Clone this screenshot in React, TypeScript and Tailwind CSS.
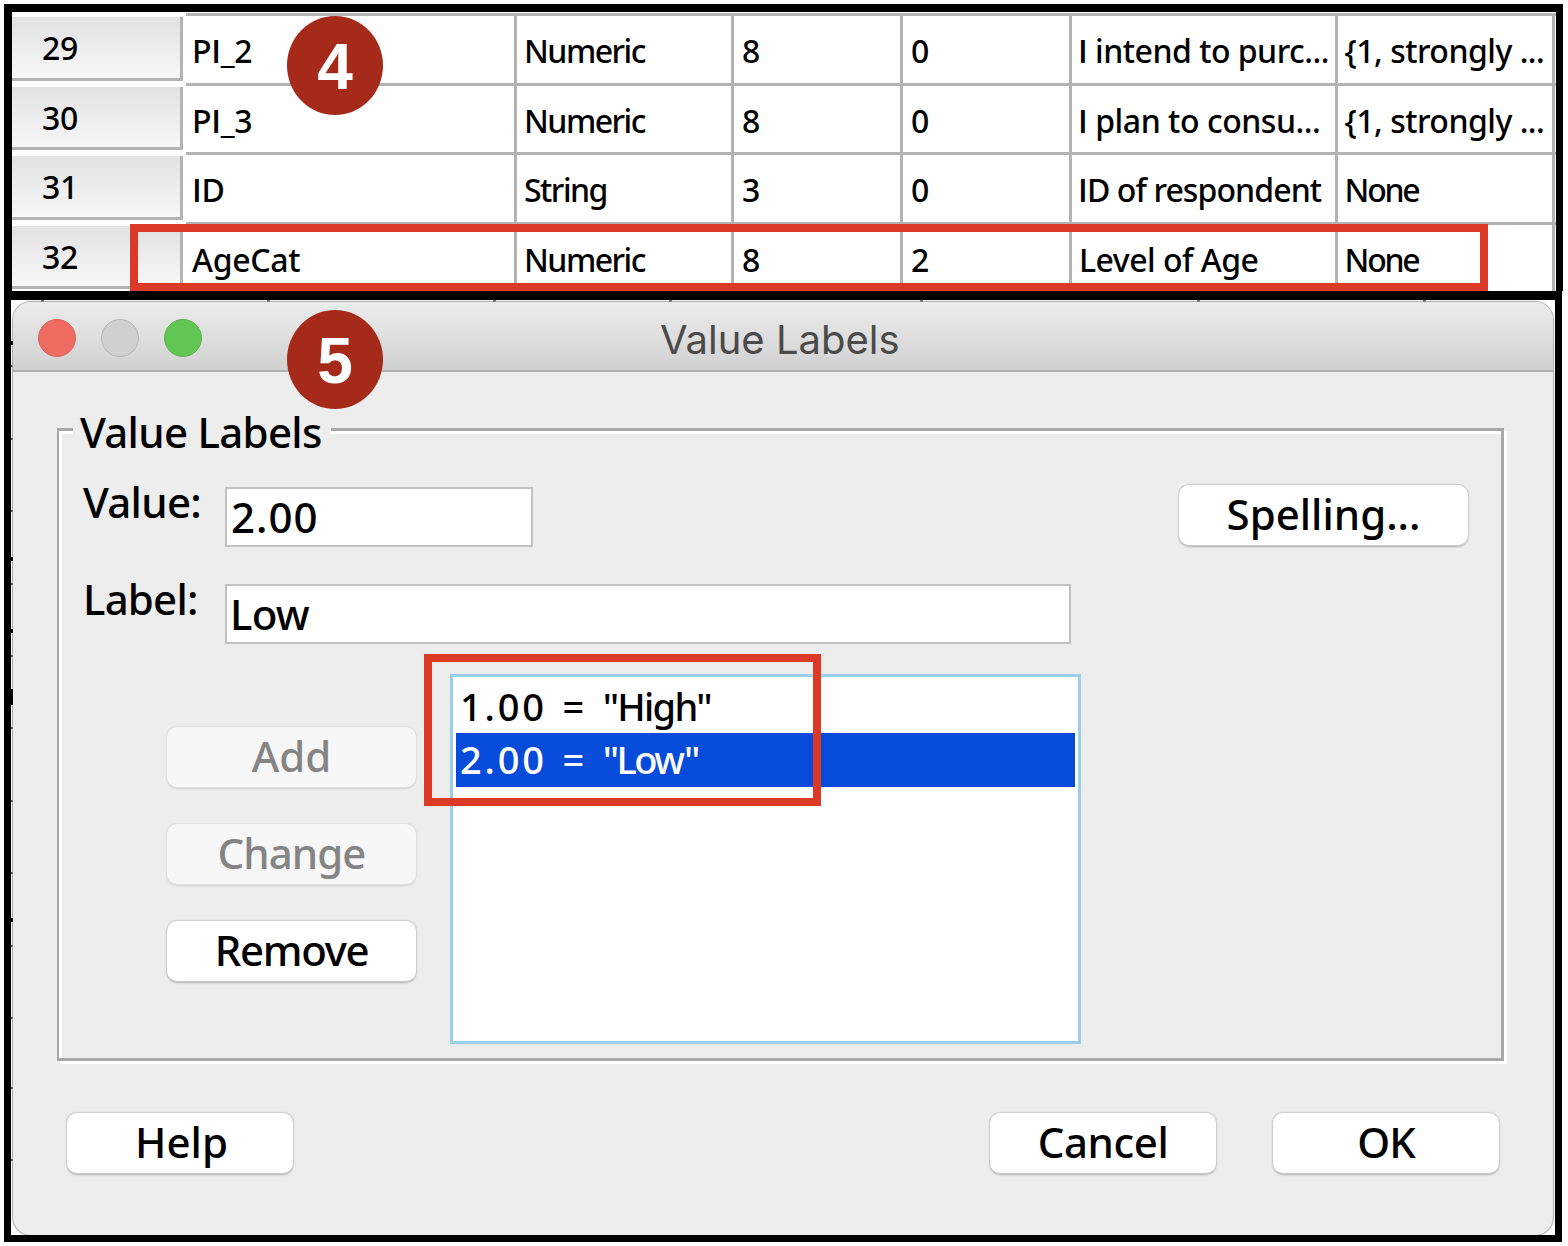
import React from 'react';
import clsx from 'clsx';

interface Variable {
  row: number;
  name: string;
  type: string;
  width: number;
  decimals: number;
  label: string;
  labelClass: string;
  values: string;
}

const VARIABLES: Variable[] = [
  { row: 29, name: 'PI_2', type: 'Numeric', width: 8, decimals: 0, label: 'I intend to purc...', labelClass: 'pl-[6px] tracking-[-0.5px]', values: '{1, strongly ...' },
  { row: 30, name: 'PI_3', type: 'Numeric', width: 8, decimals: 0, label: 'I plan to consu...', labelClass: 'pl-[6px] tracking-[-0.45px]', values: '{1, strongly ...' },
  { row: 31, name: 'ID', type: 'String', width: 3, decimals: 0, label: 'ID of respondent', labelClass: 'pl-[6px] tracking-[-0.9px]', values: 'None' },
  { row: 32, name: 'AgeCat', type: 'Numeric', width: 8, decimals: 2, label: 'Level of Age', labelClass: 'pl-[7px] tracking-[-0.5px]', values: 'None' },
];

// the sheet behind the dialog shows through as small marks along its edges
const TOP_TICKS = [41, 267, 493, 669, 920, 1197, 1423];
const SIDE_TICKS = [365, 438, 510, 583, 655, 727, 800, 872, 945, 1017, 1087, 1159];
const SIDE_MARKS = [341, 557, 629, 918];

// Noto Sans draws a capital I with serifs, Open Sans has the plain bar
const PlainI = ({ text }: { text: string }) => (
  <>
    {text.split(/(I)/).map((part, i) =>
      part === 'I' ? (
        <span key={i} className="font-['Open_Sans',sans-serif] font-semibold leading-none">
          I
        </span>
      ) : (
        part
      )
    )}
  </>
);

interface CellProps {
  className?: string;
  children?: React.ReactNode;
}

const Cell = ({ className, children }: CellProps) => (
  <div
    className={clsx(
      'shrink-0 overflow-hidden whitespace-nowrap border-r-[3px] border-t-[3px] border-[#b3b3b3] pt-[13px]',
      className
    )}
  >
    {children}
  </div>
);

const VariableRow = ({ variable }: { variable: Variable }) => (
  <div className="flex h-[69.5px] text-[32px] font-medium leading-[44px]">
    <div className="mr-[3px] mt-1 h-[63.5px] w-[171px] shrink-0 border-b-[3px] border-r-[3px] border-[#b3b3b3] bg-linear-to-b from-[#e2e2e2] to-[#f7f7f7] pl-[30px] pt-[9px] tracking-[-0.3px]">
      {variable.row}
    </div>
    <Cell className="w-[331px] pl-[6px] tracking-[-0.3px]">
      <PlainI text={variable.name} />
    </Cell>
    <Cell className="w-[217px] pl-[7px] tracking-[-1.5px]">{variable.type}</Cell>
    <Cell className="w-[169px] pl-[8px]">{variable.width}</Cell>
    <Cell className="w-[169px] pl-[8px]">{variable.decimals}</Cell>
    <Cell className={clsx('w-[266px]', variable.labelClass)}>
      <PlainI text={variable.label} />
    </Cell>
    <Cell className={clsx('w-[217px] pl-[6.5px]', variable.values === 'None' ? 'tracking-[-2.2px]' : 'tracking-[-0.5px]')}>
      {variable.values}
    </Cell>
    <div className="grow border-t-[3px] border-[#b3b3b3]" />
  </div>
);

interface ButtonProps {
  className?: string;
  disabled?: boolean;
  children: React.ReactNode;
}

const Button = ({ className, disabled, children }: ButtonProps) => (
  <button
    disabled={disabled}
    className={clsx(
      'flex h-[60px] items-center justify-center rounded-[10px] pb-[3px] text-[42px] font-medium leading-none',
      disabled
        ? 'bg-[#f7f7f7] text-[#848484] shadow-[0_0_1px_1px_#dedede,0_2px_2px_#d2d2d2]'
        : 'bg-white text-black shadow-[0_0_1px_1px_#cccccc,0_2px_2px_#b0b0b0]',
      className
    )}
  >
    {children}
  </button>
);

const Badge = ({ className, children }: { className: string; children: React.ReactNode }) => (
  <div
    className={clsx(
      "absolute left-[287px] flex h-[99px] w-[96px] items-center justify-center rounded-[50%] bg-[#a52a1a] pt-[2px] font-['Liberation_Sans',sans-serif] text-[64px] font-bold leading-none text-white",
      className
    )}
  >
    {children}
  </div>
);

const TitleBar = () => (
  <div className="flex h-[70px] items-center gap-[25px] border-b-2 border-[#b0b0b0] bg-linear-to-b from-[#ececec] to-[#d1d1d1] pl-[25px] pt-[3px]">
    <span className="size-[38px] rounded-full border border-[#d9625a] bg-[#ed6b60]" />
    <span className="size-[38px] rounded-full border border-[#b5b5b5] bg-[#d0d0d0]" />
    <span className="size-[38px] rounded-full border border-[#58b04b] bg-[#61c654]" />
    <h1 className="ml-[433px] pt-[4px] font-[Inter,sans-serif] text-[40px] leading-none text-[#4a4a4a]">
      Value Labels
    </h1>
  </div>
);

const ValueLabelsDialog = () => (
  <div className="mx-[2px] mt-[2px] h-[933px] overflow-hidden rounded-[18px] bg-[#ededed] shadow-[0_0_1px_1px_#a8a8a8]">
    <TitleBar />

    <div className="ml-[44px] mt-[56px] h-[633px] w-[1447px] border-[3px] border-l-2 border-[#a8a8a8] shadow-[3px_3px_0_#fff,inset_3px_3px_0_#fff]">
      <div className="-mt-[24px] ml-[14px] h-[50px] w-[258px] bg-[#ededed] pl-[7px] text-[42px] font-medium leading-[50px] tracking-[-0.7px]">
        Value Labels
      </div>

      <div className="mt-[30px] flex h-[60px]">
        <label className="-mt-[15px] ml-[24px] w-[142px] text-[42px] font-medium leading-[60px] tracking-[-0.7px]">
          Value:
        </label>
        <input
          readOnly
          value="2.00"
          className="w-[308px] border-2 border-[#c2c2c2] bg-white pb-[2px] pl-[4px] text-[42px] font-medium tracking-[1px] outline-none"
        />
        <Button className="-mt-[2px] ml-[646px] w-[289px]">Spelling...</Button>
      </div>

      <div className="mt-[37px] flex h-[60px]">
        <label className="-mt-[15px] ml-[24px] w-[142px] text-[42px] font-medium leading-[60px] tracking-[-0.8px]">
          Label:
        </label>
        <input
          readOnly
          value="Low"
          className="w-[846px] border-2 border-[#c2c2c2] bg-white pb-[2px] pl-[3px] text-[42px] font-medium tracking-[-0.7px] outline-none"
        />
      </div>

      <div className="mt-[30px] flex">
        <div className="ml-[108px] mt-[53px] flex w-[249px] flex-col gap-[37px]">
          <Button disabled>Add</Button>
          <Button disabled className="tracking-[-0.9px]">Change</Button>
          <Button className="tracking-[-1.3px]">Remove</Button>
        </div>
        <ul className="ml-[34px] h-[370px] w-[631px] border-[3px] border-[#9bcfe8] bg-white p-[3px] text-[38px] font-medium leading-[53px]">
          <li className="h-[53px] pl-[4px]">
            <span className="tracking-[2.8px] [word-spacing:3px]">1.00 = </span>
            <span className="tracking-[-1.7px]">"High"</span>
          </li>
          <li className="h-[54px] bg-[#074bdb] pl-[4px] text-white">
            <span className="tracking-[2.8px] [word-spacing:3px]">2.00 = </span>
            <span className="tracking-[-2.5px]">"Low"</span>
          </li>
        </ul>
      </div>
    </div>

    <div className="mt-[52px] flex pl-[54px]">
      <Button className="w-[226px] pl-[3px]">Help</Button>
      <Button className="ml-[697px] w-[226px] tracking-[-0.4px]">Cancel</Button>
      <Button className="ml-[57px] w-[226px] tracking-[-1px]">OK</Button>
    </div>
  </div>
);

export default function App() {
  return (
    <div className="relative h-[1246px] w-[1568px] overflow-hidden bg-white pl-1 pt-1 font-['Noto_Sans','Open_Sans',sans-serif] text-black">
      <section className="h-[287px] w-[1559px] overflow-hidden border-8 border-b-0 border-r-[7px] border-black pt-px">
        {VARIABLES.map((v) => (
          <VariableRow key={v.row} variable={v} />
        ))}
      </section>

      <section className="h-[951px] w-[1558px] overflow-hidden border-[7px] border-t-[9px] border-black bg-white">
        <ValueLabelsDialog />
      </section>

      {TOP_TICKS.map((x) => (
        <span key={x} className="absolute top-[300px] h-[2px] w-[3px] bg-[#7a7a7a]" style={{ left: x }} />
      ))}
      {SIDE_TICKS.map((y) => (
        <span key={y} className="absolute left-[11px] h-[2px] w-[2px] bg-[#6a6a6a]" style={{ top: y }} />
      ))}
      {SIDE_MARKS.map((y) => (
        <span key={y} className="absolute left-[11px] h-[4px] w-[2px] bg-black" style={{ top: y }} />
      ))}
      <span className="absolute left-[11px] top-[689px] h-[16px] w-[2px] bg-black" />

      <div className="absolute left-[130px] top-[224px] h-[67px] w-[1358px] border-8 border-[#dc3a26]" />
      <div className="absolute left-[424px] top-[654px] h-[152px] w-[397px] border-8 border-[#dc3a26]" />
      <Badge className="top-[16px]">4</Badge>
      <Badge className="top-[310px]">5</Badge>
    </div>
  );
}
